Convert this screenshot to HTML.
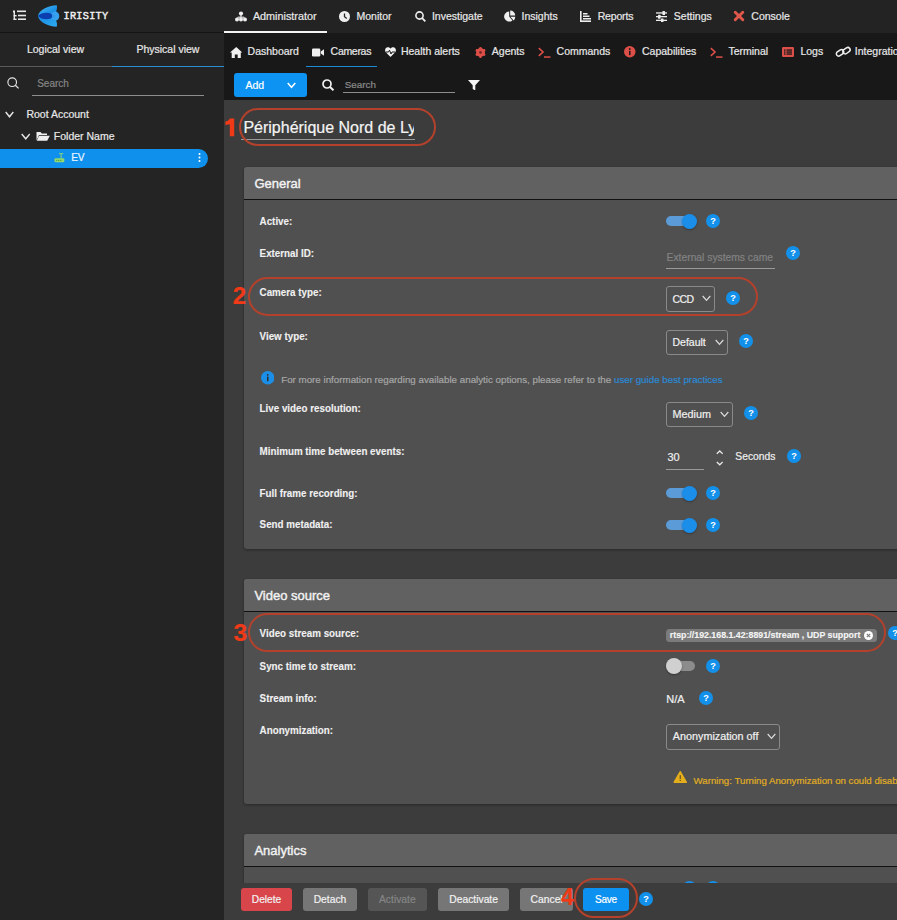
<!DOCTYPE html><html><head><meta charset="utf-8"><style>
html,body{margin:0;padding:0}
body{width:897px;height:920px;overflow:hidden;position:relative;background:#3c3c3c;font-family:"Liberation Sans", sans-serif}
.a{position:absolute}
.t{position:absolute;white-space:nowrap;-webkit-text-stroke:0.2px currentColor}
</style></head><body>
<div class="a" style="left:0px;top:0px;width:224px;height:920px;background:#242424"></div>
<div class="a" style="left:0px;top:0px;width:224px;height:32px;background:#232323"></div>
<div class="a" style="left:0px;top:32px;width:224px;height:1px;background:#151515"></div>
<div class="a" style="left:224px;top:0px;width:673px;height:33px;background:#232323"></div>
<div class="a" style="left:224px;top:33px;width:673px;height:67px;background:#181818"></div>
<div class="a" style="left:224px;top:31px;width:103px;height:2px;background:#f2f2f2"></div>
<svg class="a" style="left:13px;top:10px;" width="13" height="11" viewBox="0 0 13 11"><g fill="#e8e8e8">
<rect x="0" y="0.5" width="2" height="2"/><rect x="4" y="0.5" width="9" height="1.6"/>
<rect x="0.6" y="1" width="1.4" height="9"/>
<rect x="0.6" y="5" width="3" height="1.4"/><rect x="5" y="4.7" width="8" height="1.6"/>
<rect x="0.6" y="8.6" width="3" height="1.4"/><rect x="5" y="8.4" width="8" height="1.6"/>
</g></svg>
<svg class="a" style="left:34px;top:2px;" width="30" height="28" viewBox="0 0 30 28"><defs>
<linearGradient id="lg1" x1="0" y1="0" x2="0.6" y2="1"><stop offset="0" stop-color="#4cc2f4"/><stop offset="0.5" stop-color="#1b8ee6"/><stop offset="1" stop-color="#2aa6ee"/></linearGradient>
</defs>
<path d="M22.7,3.3 C14,3.5 5,8 4,14 C5,20 14,24.5 22.7,24.8 C23.4,22.5 23,20.5 22,18.6 C24.5,17.5 25.2,15.5 25.2,14 C25.2,12.5 24.5,10.5 22,9.4 C23,7.5 23.4,5.5 22.7,3.3 Z" fill="url(#lg1)"/>
<path d="M4,14 C7,10.5 13,10 17,11.5 C19,12.3 20.5,13.3 22,14 C20.5,14.7 19,15.7 17,16.5 C13,18 7,17.5 4,14 Z" fill="#0b3fb0"/>
<path d="M17,11.5 C19.5,9.5 22,9.4 22,9.4 C24.5,10.5 25.2,12.5 25.2,14 C25.2,15.5 24.5,17.5 22,18.6 C20,18 18.5,17 17,16.5 C18.5,15 18.5,13 17,11.5 Z" fill="#3aa2f0" opacity="0.85"/></svg>
<div class="t" style="left:63.5px;top:11.97px;font-size:10.2px;line-height:10.2px;color:#eeeeee;font-weight:400;letter-spacing:0.3px;font-family:'Liberation Mono',monospace;font-weight:400;-webkit-text-stroke:0.45px #eeeeee;">IRISITY</div>
<div class="t" style="left:26.9px;top:43.71px;font-size:10.5px;line-height:10.5px;color:#e8e8e8;font-weight:400;">Logical view</div>
<div class="t" style="left:136.4px;top:43.71px;font-size:10.5px;line-height:10.5px;color:#e8e8e8;font-weight:400;">Physical view</div>
<div class="a" style="left:0px;top:66px;width:112px;height:1px;background:#5a5a5a"></div>
<div class="a" style="left:112px;top:66px;width:112px;height:1.3px;background:#2a8fd2"></div>
<svg class="a" style="left:7px;top:77px;" width="13" height="12" viewBox="0 0 13 12"><circle cx="5.2" cy="5.2" r="4.3" fill="none" stroke="#e6e6e6" stroke-width="1.15"/><line x1="8.3" y1="8.3" x2="11.6" y2="11.4" stroke="#e6e6e6" stroke-width="1.3"/></svg>
<div class="t" style="left:37.2px;top:79.13px;font-size:10px;line-height:10px;color:#858585;font-weight:400;">Search</div>
<div class="a" style="left:32px;top:95px;width:172px;height:1px;background:#8d8d8d"></div>
<svg class="a" style="left:4.6px;top:110.8px;" width="9" height="7.5" viewBox="0 0 9 7.5"><polyline points="0.7,1 4.5,5.8 8.3,1" fill="none" stroke="#e6e6e6" stroke-width="1.4"/></svg>
<div class="t" style="left:26.4px;top:109.11px;font-size:10.5px;line-height:10.5px;color:#e8e8e8;font-weight:400;">Root Account</div>
<svg class="a" style="left:20.6px;top:132.5px;" width="9.5" height="7.5" viewBox="0 0 9.5 7.5"><polyline points="0.7,1 4.75,5.8 8.8,1" fill="none" stroke="#e6e6e6" stroke-width="1.4"/></svg>
<svg class="a" style="left:35.5px;top:131px;" width="14" height="10" viewBox="0 0 14 10"><path d="M0.5,1 L4.5,1 L5.8,2.4 L11,2.4 L11,4 L3,4 L0.5,9.5 Z" fill="#efefef"/><path d="M3,4.8 L13.8,4.8 L11.2,9.8 L0.8,9.8 Z" fill="#efefef"/></svg>
<div class="t" style="left:53.8px;top:130.91px;font-size:10.5px;line-height:10.5px;color:#e8e8e8;font-weight:400;">Folder Name</div>
<div class="a" style="left:0px;top:148.7px;width:208px;height:19.5px;background:#0f90ec;border-radius:0 10px 10px 0"></div>
<svg class="a" style="left:54px;top:152px;" width="11" height="11" viewBox="0 0 11 11"><rect x="0.5" y="6.3" width="9.8" height="4" rx="1" fill="#8fd872"/><rect x="6.6" y="2.2" width="1" height="4.3" fill="#8fd872"/><rect x="5" y="1.2" width="4.2" height="1" fill="#8fd872"/><circle cx="2.8" cy="8.3" r="0.6" fill="#3a8a3a"/><circle cx="4.8" cy="8.3" r="0.6" fill="#3a8a3a"/><circle cx="6.8" cy="8.3" r="0.6" fill="#3a8a3a"/></svg>
<div class="t" style="left:71.3px;top:153.17px;font-size:10.2px;line-height:10.2px;color:#eaf6ff;font-weight:400;letter-spacing:-0.3px;">EV</div>
<svg class="a" style="left:197.5px;top:153px;" width="3" height="9" viewBox="0 0 3 9"><circle cx="1.5" cy="1" r="1" fill="#fff"/><circle cx="1.5" cy="4.5" r="1" fill="#fff"/><circle cx="1.5" cy="8" r="1" fill="#fff"/></svg>
<svg class="a" style="left:235px;top:10.5px;" width="12" height="11" viewBox="0 0 12 11"><g fill="#eee"><circle cx="6" cy="2.6" r="2.1"/><circle cx="2" cy="8.4" r="2"/><circle cx="6" cy="8.4" r="2"/><circle cx="10" cy="8.4" r="2"/><rect x="5.5" y="3" width="1" height="4"/><path d="M1.5,7.5 L3,5.6 L9,5.6 L10.5,7.5 Z" opacity="0.75"/></g></svg>
<div class="t" style="left:252.9px;top:10.86px;font-size:10.8px;line-height:10.8px;color:#e8e8e8;font-weight:400;">Administrator</div>
<svg class="a" style="left:338.5px;top:10.5px;" width="11" height="11" viewBox="0 0 11 11"><circle cx="5.5" cy="5.5" r="5.5" fill="#eee"/><path d="M5.5,2.5 L5.5,5.8 L7.8,7.6" fill="none" stroke="#232323" stroke-width="1.3"/></svg>
<div class="t" style="left:356.5px;top:11.11px;font-size:10.5px;line-height:10.5px;color:#e8e8e8;font-weight:400;">Monitor</div>
<svg class="a" style="left:414.5px;top:10.5px;" width="11" height="11" viewBox="0 0 11 11"><circle cx="4.5" cy="4.5" r="3.6" fill="none" stroke="#eee" stroke-width="1.6"/><line x1="7.2" y1="7.2" x2="10.3" y2="10.3" stroke="#eee" stroke-width="1.8"/></svg>
<div class="t" style="left:431.9px;top:11.11px;font-size:10.5px;line-height:10.5px;color:#e8e8e8;font-weight:400;">Investigate</div>
<svg class="a" style="left:504px;top:10px;" width="13" height="12" viewBox="0 0 13 12"><g fill="#f0f0f0"><path d="M5.2,6.6 L5.2,1.6 A5,5 0 1 0 8.4,10.4 Z"/><path d="M6.2,5.6 L6.2,0.6 A5,5 0 0 1 11.2,5.6 Z"/><path d="M6.4,6.7 L11.3,6.7 A5,5 0 0 1 9.6,10.4 Z"/></g></svg>
<div class="t" style="left:521.5px;top:11.11px;font-size:10.5px;line-height:10.5px;color:#e8e8e8;font-weight:400;">Insights</div>
<svg class="a" style="left:579.7px;top:10.5px;" width="11" height="11" viewBox="0 0 11 11"><g fill="#eee"><rect x="0" y="0" width="1.6" height="11"/><rect x="0" y="9.4" width="11" height="1.6"/><rect x="3" y="2" width="4.5" height="1.5"/><rect x="3" y="4.5" width="6.5" height="1.5"/><rect x="3" y="7" width="8" height="1.5"/></g></svg>
<div class="t" style="left:597.7px;top:11.11px;font-size:10.5px;line-height:10.5px;color:#e8e8e8;font-weight:400;letter-spacing:-0.17px;">Reports</div>
<svg class="a" style="left:655.9px;top:10.5px;" width="11" height="11" viewBox="0 0 11 11"><g fill="#eee"><rect x="0" y="1.3" width="11" height="1.3"/><rect x="0" y="5" width="11" height="1.3"/><rect x="0" y="8.7" width="11" height="1.3"/><rect x="6.5" y="0" width="2.5" height="4" rx="0.5"/><rect x="2" y="3.7" width="2.5" height="4" rx="0.5"/><rect x="5" y="7.4" width="2.5" height="4" rx="0.5"/></g></svg>
<div class="t" style="left:673.8px;top:11.11px;font-size:10.5px;line-height:10.5px;color:#e8e8e8;font-weight:400;">Settings</div>
<svg class="a" style="left:733px;top:9.5px;" width="12" height="12" viewBox="0 0 12 12"><g stroke="#e2574c" stroke-width="2.9" stroke-linecap="round"><line x1="2.2" y1="2.2" x2="9.8" y2="9.8"/><line x1="9.8" y1="2.2" x2="2.2" y2="9.8"/></g></svg>
<div class="t" style="left:751.3px;top:11.11px;font-size:10.5px;line-height:10.5px;color:#e8e8e8;font-weight:400;">Console</div>
<svg class="a" style="left:229.8px;top:46.5px;" width="12.5" height="11" viewBox="0 0 12.5 11"><path d="M6.25,0 L12.5,5.6 L10.8,5.6 L10.8,11 L7.7,11 L7.7,7.6 L4.8,7.6 L4.8,11 L1.7,11 L1.7,5.6 L0,5.6 Z" fill="#f0f0f0"/></svg>
<div class="t" style="left:247.6px;top:46.11px;font-size:10.5px;line-height:10.5px;color:#e8e8e8;font-weight:400;">Dashboard</div>
<svg class="a" style="left:311.9px;top:47.5px;" width="12.5" height="9" viewBox="0 0 12.5 9"><rect x="0" y="0.5" width="8.3" height="8" rx="1.2" fill="#f0f0f0"/><path d="M8.8,3.5 L12.3,1 L12.3,8 L8.8,5.5 Z" fill="#f0f0f0"/></svg>
<div class="t" style="left:330.6px;top:46.11px;font-size:10.5px;line-height:10.5px;color:#e8e8e8;font-weight:400;letter-spacing:-0.3px;">Cameras</div>
<div class="a" style="left:306px;top:65.5px;width:71px;height:1.6px;background:#1d8ad8"></div>
<svg class="a" style="left:384.5px;top:46.5px;" width="11" height="10" viewBox="0 0 11 10"><path d="M5.5,10 L0.8,5.3 C-0.6,3.7 0,0.6 2.8,0.3 C4,0.2 5,0.9 5.5,1.7 C6,0.9 7,0.2 8.2,0.3 C11,0.6 11.6,3.7 10.2,5.3 Z" fill="#f0f0f0"/><polyline points="1,5 3.5,5 4.5,3.2 6,7 7,5 10,5" fill="none" stroke="#181818" stroke-width="1"/></svg>
<div class="t" style="left:400.9px;top:46.11px;font-size:10.5px;line-height:10.5px;color:#e8e8e8;font-weight:400;">Health alerts</div>
<svg class="a" style="left:474.5px;top:46.5px;" width="11" height="11" viewBox="0 0 11 11"><g fill="#dc4f48"><circle cx="5.5" cy="5.5" r="4.4"/><circle cx="5.5" cy="1.3" r="1.3"/><circle cx="5.5" cy="9.7" r="1.3"/><circle cx="1.9" cy="3.4" r="1.3"/><circle cx="9.1" cy="3.4" r="1.3"/><circle cx="1.9" cy="7.6" r="1.3"/><circle cx="9.1" cy="7.6" r="1.3"/></g><circle cx="5.5" cy="5.5" r="1.4" fill="#7a2a28"/></svg>
<div class="t" style="left:491.8px;top:46.11px;font-size:10.5px;line-height:10.5px;color:#e8e8e8;font-weight:400;">Agents</div>
<svg class="a" style="left:538.4px;top:46.5px;" width="13" height="11" viewBox="0 0 13 11"><polyline points="0.8,1.2 5,5 0.8,8.8" fill="none" stroke="#dc4f48" stroke-width="1.6"/><rect x="6" y="9.3" width="6.5" height="1.5" fill="#dc4f48"/></svg>
<div class="t" style="left:556.6px;top:46.11px;font-size:10.5px;line-height:10.5px;color:#e8e8e8;font-weight:400;">Commands</div>
<svg class="a" style="left:624.4px;top:46px;" width="11.5" height="11.5" viewBox="0 0 11.5 11.5"><circle cx="5.75" cy="5.75" r="5.75" fill="#dc4f48"/><rect x="5" y="4.8" width="1.5" height="4.3" fill="#181818"/><circle cx="5.75" cy="3" r="0.9" fill="#181818"/></svg>
<div class="t" style="left:642px;top:46.11px;font-size:10.5px;line-height:10.5px;color:#e8e8e8;font-weight:400;">Capabilities</div>
<svg class="a" style="left:709.8px;top:46.5px;" width="13" height="11" viewBox="0 0 13 11"><polyline points="0.8,1.2 5,5 0.8,8.8" fill="none" stroke="#dc4f48" stroke-width="1.6"/><rect x="6" y="9.3" width="6.5" height="1.5" fill="#dc4f48"/></svg>
<div class="t" style="left:728.4px;top:46.11px;font-size:10.5px;line-height:10.5px;color:#e8e8e8;font-weight:400;">Terminal</div>
<svg class="a" style="left:782.2px;top:46.5px;" width="12" height="10" viewBox="0 0 12 10"><rect x="0" y="0" width="12" height="10" rx="1.3" fill="#dc4f48"/><g fill="#181818"><rect x="2" y="2.4" width="1.5" height="1.3"/><rect x="4.5" y="2.4" width="5.5" height="1.3"/><rect x="2" y="4.4" width="1.5" height="1.3"/><rect x="4.5" y="4.4" width="5.5" height="1.3"/><rect x="2" y="6.4" width="1.5" height="1.3"/><rect x="4.5" y="6.4" width="5.5" height="1.3"/></g></svg>
<div class="t" style="left:800.4px;top:46.11px;font-size:10.5px;line-height:10.5px;color:#e8e8e8;font-weight:400;">Logs</div>
<svg class="a" style="left:835px;top:45px;" width="16" height="13" viewBox="0 0 16 13"><g fill="none" stroke="#f0f0f0" stroke-width="1.5"><rect x="1.1" y="5.6" width="7.8" height="4.6" rx="2.3" transform="rotate(-35 5 7.9)"/><rect x="7.6" y="3.4" width="7.8" height="4.6" rx="2.3" transform="rotate(-35 11.5 5.7)"/></g></svg>
<div class="t" style="left:854.8px;top:46.11px;font-size:10.5px;line-height:10.5px;color:#e8e8e8;font-weight:400;">Integrations</div>
<div class="a" style="left:234px;top:73px;width:73px;height:24px;background:#0d93f2;border-radius:3px"></div>
<div class="t" style="left:245.5px;top:79.71px;font-size:10.5px;line-height:10.5px;color:#ffffff;font-weight:400;">Add</div>
<svg class="a" style="left:286.7px;top:82px;" width="9" height="7" viewBox="0 0 9 7"><polyline points="0.7,1 4.5,5.3 8.3,1" fill="none" stroke="#ffffff" stroke-width="1.5"/></svg>
<svg class="a" style="left:322px;top:78.5px;" width="12.5" height="12" viewBox="0 0 12.5 12"><circle cx="5" cy="5" r="4" fill="none" stroke="#f0f0f0" stroke-width="1.7"/><line x1="8" y1="8" x2="11.5" y2="11.3" stroke="#f0f0f0" stroke-width="2"/></svg>
<div class="t" style="left:344.8px;top:80.30px;font-size:9.8px;line-height:9.8px;color:#8a8a8a;font-weight:400;">Search</div>
<div class="a" style="left:343px;top:92px;width:112px;height:1px;background:#8d8d8d"></div>
<svg class="a" style="left:468.2px;top:79.5px;" width="12" height="10.5" viewBox="0 0 12 10.5"><path d="M0,0 L12,0 L7.3,5.2 L7.3,10.5 L4.7,9 L4.7,5.2 Z" fill="#f4f4f4"/></svg>
<div class="t" style="left:243.4px;top:120.46px;font-size:16px;line-height:16px;color:#f4f4f4;font-weight:400;width:171px;overflow:hidden;">Périphérique Nord de Ly</div>
<div class="a" style="left:241px;top:138.5px;width:173.5px;height:1px;background:#9a9a9a"></div>
<div class="a" style="left:238.5px;top:107.8px;width:197.5px;height:38.2px;box-sizing:border-box;border:2px solid #b3412c;border-radius:19.1px"></div>
<svg class="a" style="left:224px;top:117px;" width="12" height="21" viewBox="0 0 12 21"><path d="M6,1.4 L10.2,1.4 L10.2,19.3 L5.8,19.3 L5.8,7.2 L1.4,8 L1.4,4.6 C3.6,4.2 5,3 6,1.4 Z" fill="#f03a17"/></svg>
<div class="a" style="left:244px;top:167px;width:700px;height:382px;background:#505050;border-radius:3px;box-shadow:0 1px 3px rgba(0,0,0,.35)"></div>
<div class="a" style="left:244px;top:167px;width:700px;height:32px;background:#616161;border-radius:3px 3px 0 0"></div>
<div class="a" style="left:244px;top:199px;width:700px;height:1px;background:#111"></div>
<div class="t" style="left:254.4px;top:176.90px;font-size:13px;line-height:13px;color:#f2f2f2;font-weight:400;-webkit-text-stroke:0.4px #f2f2f2;">General</div>
<div class="t" style="left:259.6px;top:216.80px;font-size:9.8px;line-height:9.8px;color:#f0f0f0;font-weight:700;-webkit-text-stroke:0.1px #f0f0f0;transform:scaleY(1.13);transform-origin:0 84.65%;">Active:</div>
<div class="a" style="left:666px;top:216px;width:28px;height:10px;background:#5b9bd8;border-radius:5px"></div>
<div class="a" style="left:682px;top:213.5px;width:15px;height:15px;background:#1a8ee8;border-radius:50%;box-shadow:0 1px 2px rgba(0,0,0,.3)"></div>
<svg class="a" style="left:706.0px;top:214.0px;" width="14" height="14" viewBox="0 0 14 14"><circle cx="7.0" cy="7.0" r="7.0" fill="#1290ea"/><text x="7.0" y="10.3" text-anchor="middle" font-family="Liberation Sans" font-weight="700" font-size="9.2" fill="#fff">?</text></svg>
<div class="t" style="left:259.6px;top:249.10px;font-size:9.8px;line-height:9.8px;color:#f0f0f0;font-weight:700;-webkit-text-stroke:0.1px #f0f0f0;transform:scaleY(1.13);transform-origin:0 84.65%;">External ID:</div>
<div class="t" style="left:666.6px;top:252.78px;font-size:10.3px;line-height:10.3px;color:#828282;font-weight:400;width:108px;overflow:hidden;">External systems came</div>
<div class="a" style="left:666px;top:267.5px;width:109px;height:1px;background:#9a9a9a"></div>
<svg class="a" style="left:786.0px;top:246.0px;" width="14" height="14" viewBox="0 0 14 14"><circle cx="7.0" cy="7.0" r="7.0" fill="#1290ea"/><text x="7.0" y="10.3" text-anchor="middle" font-family="Liberation Sans" font-weight="700" font-size="9.2" fill="#fff">?</text></svg>
<div class="t" style="left:259.6px;top:288.20px;font-size:9.8px;line-height:9.8px;color:#f0f0f0;font-weight:700;-webkit-text-stroke:0.1px #f0f0f0;transform:scaleY(1.13);transform-origin:0 84.65%;">Camera type:</div>
<div class="a" style="left:666px;top:286px;width:49px;height:25.5px;box-sizing:border-box;border:1px solid #8a8a8a;border-radius:3px"></div>
<div class="t" style="left:672.5px;top:294.01px;font-size:10.5px;line-height:10.5px;color:#f0f0f0;font-weight:400;letter-spacing:-0.6px;">CCD</div>
<svg class="a" style="left:701.7px;top:295.25px;" width="9" height="7" viewBox="0 0 9 7"><polyline points="0.7,1 4.5,5.3 8.3,1" fill="none" stroke="#dcdcdc" stroke-width="1.2"/></svg>
<svg class="a" style="left:726.0px;top:291.0px;" width="14" height="14" viewBox="0 0 14 14"><circle cx="7.0" cy="7.0" r="7.0" fill="#1290ea"/><text x="7.0" y="10.3" text-anchor="middle" font-family="Liberation Sans" font-weight="700" font-size="9.2" fill="#fff">?</text></svg>
<div class="a" style="left:248.4px;top:277px;width:509.70000000000005px;height:39px;box-sizing:border-box;border:2px solid #b3412c;border-radius:19.5px"></div>
<div class="t" style="left:232.8px;top:283.68px;font-size:24px;line-height:24px;color:#f03a17;font-weight:700;">2</div>
<div class="t" style="left:259.6px;top:331.90px;font-size:9.8px;line-height:9.8px;color:#f0f0f0;font-weight:700;-webkit-text-stroke:0.1px #f0f0f0;transform:scaleY(1.13);transform-origin:0 84.65%;">View type:</div>
<div class="a" style="left:666px;top:330px;width:62px;height:24.5px;box-sizing:border-box;border:1px solid #8a8a8a;border-radius:3px"></div>
<div class="t" style="left:672.5px;top:337.31px;font-size:10.5px;line-height:10.5px;color:#f0f0f0;font-weight:400;">Default</div>
<svg class="a" style="left:714.8px;top:338.75px;" width="9" height="7" viewBox="0 0 9 7"><polyline points="0.7,1 4.5,5.3 8.3,1" fill="none" stroke="#dcdcdc" stroke-width="1.2"/></svg>
<svg class="a" style="left:739.0px;top:334.0px;" width="14" height="14" viewBox="0 0 14 14"><circle cx="7.0" cy="7.0" r="7.0" fill="#1290ea"/><text x="7.0" y="10.3" text-anchor="middle" font-family="Liberation Sans" font-weight="700" font-size="9.2" fill="#fff">?</text></svg>
<svg class="a" style="left:260.7px;top:371.4px;" width="13.5" height="13.5" viewBox="0 0 13.5 13.5"><circle cx="6.75" cy="6.75" r="6.75" fill="#1b8fe8"/><rect x="6" y="5.6" width="1.5" height="4.6" fill="#2c2c2c"/><circle cx="6.75" cy="3.8" r="0.9" fill="#2c2c2c"/></svg>
<div class="t" style="left:281.2px;top:375.42px;font-size:9.78px;line-height:9.78px;color:#a6a6a6;font-weight:400;">For more information regarding available analytic options, please refer to the <span style="color:#2a8ad6">user guide best practices</span></div>
<div class="t" style="left:259.6px;top:404.00px;font-size:9.8px;line-height:9.8px;color:#f0f0f0;font-weight:700;-webkit-text-stroke:0.1px #f0f0f0;transform:scaleY(1.13);transform-origin:0 84.65%;">Live video resolution:</div>
<div class="a" style="left:666px;top:402px;width:67px;height:25px;box-sizing:border-box;border:1px solid #8a8a8a;border-radius:3px"></div>
<div class="t" style="left:672.5px;top:408.96px;font-size:10.8px;line-height:10.8px;color:#f0f0f0;font-weight:400;">Medium</div>
<svg class="a" style="left:719.6px;top:411.0px;" width="9" height="7" viewBox="0 0 9 7"><polyline points="0.7,1 4.5,5.3 8.3,1" fill="none" stroke="#dcdcdc" stroke-width="1.2"/></svg>
<svg class="a" style="left:744.0px;top:406.0px;" width="14" height="14" viewBox="0 0 14 14"><circle cx="7.0" cy="7.0" r="7.0" fill="#1290ea"/><text x="7.0" y="10.3" text-anchor="middle" font-family="Liberation Sans" font-weight="700" font-size="9.2" fill="#fff">?</text></svg>
<div class="t" style="left:259.6px;top:446.80px;font-size:9.8px;line-height:9.8px;color:#f0f0f0;font-weight:700;-webkit-text-stroke:0.1px #f0f0f0;transform:scaleY(1.13);transform-origin:0 84.65%;">Minimum time between events:</div>
<div class="t" style="left:667.5px;top:451.89px;font-size:11px;line-height:11px;color:#eeeeee;font-weight:400;">30</div>
<div class="a" style="left:666px;top:469px;width:38px;height:1px;background:#9a9a9a"></div>
<svg class="a" style="left:715.5px;top:449.5px;" width="7.5" height="16" viewBox="0 0 7.5 16"><polyline points="0.8,3.8 3.75,1 6.7,3.8" fill="none" stroke="#e8e8e8" stroke-width="1.3"/><polyline points="0.8,12 3.75,14.8 6.7,12" fill="none" stroke="#e8e8e8" stroke-width="1.3"/></svg>
<div class="t" style="left:735.3px;top:452.48px;font-size:10.3px;line-height:10.3px;color:#eeeeee;font-weight:400;">Seconds</div>
<svg class="a" style="left:787.0px;top:449.0px;" width="14" height="14" viewBox="0 0 14 14"><circle cx="7.0" cy="7.0" r="7.0" fill="#1290ea"/><text x="7.0" y="10.3" text-anchor="middle" font-family="Liberation Sans" font-weight="700" font-size="9.2" fill="#fff">?</text></svg>
<div class="t" style="left:259.6px;top:489.20px;font-size:9.8px;line-height:9.8px;color:#f0f0f0;font-weight:700;-webkit-text-stroke:0.1px #f0f0f0;transform:scaleY(1.13);transform-origin:0 84.65%;">Full frame recording:</div>
<div class="a" style="left:666px;top:488px;width:28px;height:10px;background:#5b9bd8;border-radius:5px"></div>
<div class="a" style="left:682px;top:485.5px;width:15px;height:15px;background:#1a8ee8;border-radius:50%;box-shadow:0 1px 2px rgba(0,0,0,.3)"></div>
<svg class="a" style="left:706.0px;top:486.0px;" width="14" height="14" viewBox="0 0 14 14"><circle cx="7.0" cy="7.0" r="7.0" fill="#1290ea"/><text x="7.0" y="10.3" text-anchor="middle" font-family="Liberation Sans" font-weight="700" font-size="9.2" fill="#fff">?</text></svg>
<div class="t" style="left:259.6px;top:520.40px;font-size:9.8px;line-height:9.8px;color:#f0f0f0;font-weight:700;-webkit-text-stroke:0.1px #f0f0f0;transform:scaleY(1.13);transform-origin:0 84.65%;">Send metadata:</div>
<div class="a" style="left:666px;top:520px;width:28px;height:10px;background:#5b9bd8;border-radius:5px"></div>
<div class="a" style="left:682px;top:517.5px;width:15px;height:15px;background:#1a8ee8;border-radius:50%;box-shadow:0 1px 2px rgba(0,0,0,.3)"></div>
<svg class="a" style="left:706.0px;top:518.0px;" width="14" height="14" viewBox="0 0 14 14"><circle cx="7.0" cy="7.0" r="7.0" fill="#1290ea"/><text x="7.0" y="10.3" text-anchor="middle" font-family="Liberation Sans" font-weight="700" font-size="9.2" fill="#fff">?</text></svg>
<div class="a" style="left:244px;top:579px;width:700px;height:225px;background:#505050;border-radius:3px;box-shadow:0 1px 3px rgba(0,0,0,.35)"></div>
<div class="a" style="left:244px;top:579px;width:700px;height:32px;background:#616161;border-radius:3px 3px 0 0"></div>
<div class="a" style="left:244px;top:611px;width:700px;height:1px;background:#111"></div>
<div class="t" style="left:254.4px;top:588.50px;font-size:13px;line-height:13px;color:#f2f2f2;font-weight:400;-webkit-text-stroke:0.4px #f2f2f2;">Video source</div>
<div class="t" style="left:259.6px;top:629.10px;font-size:9.8px;line-height:9.8px;color:#f0f0f0;font-weight:700;-webkit-text-stroke:0.1px #f0f0f0;transform:scaleY(1.13);transform-origin:0 84.65%;">Video stream source:</div>
<div class="a" style="left:665.8px;top:628.8px;width:211px;height:13.2px;background:#7b7b7b;border-radius:3.5px"></div>
<div class="t" style="left:669.8px;top:630.85px;font-size:8.8px;line-height:8.8px;color:#f4f4f4;font-weight:700;-webkit-text-stroke:0.15px #f4f4f4;letter-spacing:0px;">rtsp://192.168.1.42:8891/stream , UDP support</div>
<svg class="a" style="left:863.5px;top:630.5px;" width="9" height="9" viewBox="0 0 9 9"><circle cx="4.5" cy="4.5" r="4.5" fill="#fff"/><path d="M2.8,2.8 L6.2,6.2 M6.2,2.8 L2.8,6.2" stroke="#7b7b7b" stroke-width="1.2"/></svg>
<svg class="a" style="left:887.5px;top:626.0px;" width="14" height="14" viewBox="0 0 14 14"><circle cx="7.0" cy="7.0" r="7.0" fill="#1290ea"/><text x="7.0" y="10.3" text-anchor="middle" font-family="Liberation Sans" font-weight="700" font-size="9.2" fill="#fff">?</text></svg>
<div class="a" style="left:248.4px;top:613px;width:637.3000000000001px;height:38.799999999999955px;box-sizing:border-box;border:2px solid #b3412c;border-radius:19.399999999999977px"></div>
<div class="t" style="left:233.4px;top:621.06px;font-size:24.5px;line-height:24.5px;color:#f03a17;font-weight:700;">3</div>
<div class="t" style="left:259.6px;top:662.10px;font-size:9.8px;line-height:9.8px;color:#f0f0f0;font-weight:700;-webkit-text-stroke:0.1px #f0f0f0;transform:scaleY(1.13);transform-origin:0 84.65%;">Sync time to stream:</div>
<div class="a" style="left:665.5px;top:661px;width:29px;height:10px;background:#8c8c8c;border-radius:5px"></div>
<div class="a" style="left:665.5px;top:658px;width:16px;height:16px;background:#d0d0d0;border-radius:50%;box-shadow:0 1px 2px rgba(0,0,0,.35)"></div>
<svg class="a" style="left:706.0px;top:659.0px;" width="14" height="14" viewBox="0 0 14 14"><circle cx="7.0" cy="7.0" r="7.0" fill="#1290ea"/><text x="7.0" y="10.3" text-anchor="middle" font-family="Liberation Sans" font-weight="700" font-size="9.2" fill="#fff">?</text></svg>
<div class="t" style="left:259.6px;top:694.00px;font-size:9.8px;line-height:9.8px;color:#f0f0f0;font-weight:700;-webkit-text-stroke:0.1px #f0f0f0;transform:scaleY(1.13);transform-origin:0 84.65%;">Stream info:</div>
<div class="t" style="left:666.3px;top:693.69px;font-size:11px;line-height:11px;color:#eeeeee;font-weight:400;">N/A</div>
<svg class="a" style="left:698.5px;top:691.0px;" width="14" height="14" viewBox="0 0 14 14"><circle cx="7.0" cy="7.0" r="7.0" fill="#1290ea"/><text x="7.0" y="10.3" text-anchor="middle" font-family="Liberation Sans" font-weight="700" font-size="9.2" fill="#fff">?</text></svg>
<div class="t" style="left:259.6px;top:726.10px;font-size:9.8px;line-height:9.8px;color:#f0f0f0;font-weight:700;-webkit-text-stroke:0.1px #f0f0f0;transform:scaleY(1.13);transform-origin:0 84.65%;">Anonymization:</div>
<div class="a" style="left:666.3px;top:724px;width:113.5px;height:25.5px;box-sizing:border-box;border:1px solid #8a8a8a;border-radius:3px"></div>
<div class="t" style="left:672.8px;top:731.16px;font-size:10.8px;line-height:10.8px;color:#f0f0f0;font-weight:400;">Anonymization off</div>
<svg class="a" style="left:767px;top:733.25px;" width="9" height="7" viewBox="0 0 9 7"><polyline points="0.7,1 4.5,5.3 8.3,1" fill="none" stroke="#dcdcdc" stroke-width="1.2"/></svg>
<svg class="a" style="left:672.5px;top:770px;" width="14.5" height="13.5" viewBox="0 0 14.5 13.5"><path d="M7.25,1.8 L13.2,12.2 L1.3,12.2 Z" fill="#e4ad1c" stroke="#e4ad1c" stroke-width="1.6" stroke-linejoin="round"/><rect x="6.7" y="5.2" width="1.1" height="3.9" fill="#5a4a20"/><rect x="6.7" y="9.9" width="1.1" height="1.1" fill="#5a4a20"/></svg>
<div class="t" style="left:693.6px;top:775.51px;font-size:9.68px;line-height:9.68px;color:#e0ad22;font-weight:400;">Warning: Turning Anonymization on could disable analytics</div>
<div class="a" style="left:244px;top:834px;width:700px;height:200px;background:#505050;border-radius:3px;box-shadow:0 1px 3px rgba(0,0,0,.35)"></div>
<div class="a" style="left:244px;top:834px;width:700px;height:32px;background:#616161;border-radius:3px 3px 0 0"></div>
<div class="a" style="left:244px;top:866px;width:700px;height:1px;background:#111"></div>
<div class="t" style="left:254.4px;top:844.00px;font-size:13px;line-height:13px;color:#f2f2f2;font-weight:400;-webkit-text-stroke:0.4px #f2f2f2;">Analytics</div>
<div class="a" style="left:666px;top:883px;width:28px;height:10px;background:#5b9bd8;border-radius:5px"></div>
<div class="a" style="left:682px;top:880.5px;width:15px;height:15px;background:#1a8ee8;border-radius:50%;box-shadow:0 1px 2px rgba(0,0,0,.3)"></div>
<svg class="a" style="left:706.0px;top:881.0px;" width="14" height="14" viewBox="0 0 14 14"><circle cx="7.0" cy="7.0" r="7.0" fill="#1290ea"/><text x="7.0" y="10.3" text-anchor="middle" font-family="Liberation Sans" font-weight="700" font-size="9.2" fill="#fff">?</text></svg>
<div class="a" style="left:224px;top:883px;width:673px;height:37px;background:#3c3c3c"></div>
<div class="a" style="left:240.6px;top:888.4px;width:51.400000000000006px;height:22.4px;background:#d8454a;border-radius:3px"></div>
<div class="t" style="left:251.8px;top:894.97px;font-size:10.2px;line-height:10.2px;color:#f2f2f2;font-weight:400;">Delete</div>
<div class="a" style="left:303px;top:888.4px;width:54px;height:22.4px;background:#767676;border-radius:3px"></div>
<div class="t" style="left:313.7px;top:894.88px;font-size:10.3px;line-height:10.3px;color:#f2f2f2;font-weight:400;">Detach</div>
<div class="a" style="left:368.2px;top:888.4px;width:58.80000000000001px;height:22.4px;background:#555555;border-radius:3px"></div>
<div class="t" style="left:379px;top:894.88px;font-size:10.3px;line-height:10.3px;color:#858585;font-weight:400;">Activate</div>
<div class="a" style="left:438px;top:888.4px;width:71px;height:22.4px;background:#767676;border-radius:3px"></div>
<div class="t" style="left:449.3px;top:894.88px;font-size:10.3px;line-height:10.3px;color:#f2f2f2;font-weight:400;">Deactivate</div>
<div class="a" style="left:520px;top:888.4px;width:52.5px;height:22.4px;background:#767676;border-radius:3px"></div>
<div class="t" style="left:530.6px;top:894.88px;font-size:10.3px;line-height:10.3px;color:#f2f2f2;font-weight:400;">Cancel</div>
<div class="a" style="left:583.4px;top:888.4px;width:45.200000000000045px;height:22.4px;background:#0d91f0;border-radius:3px"></div>
<div class="t" style="left:595.1px;top:895.13px;font-size:10px;line-height:10px;color:#ffffff;font-weight:400;letter-spacing:-0.3px;">Save</div>
<svg class="a" style="left:639.0px;top:892.0px;" width="14" height="14" viewBox="0 0 14 14"><circle cx="7.0" cy="7.0" r="7.0" fill="#1290ea"/><text x="7.0" y="10.3" text-anchor="middle" font-family="Liberation Sans" font-weight="700" font-size="9.2" fill="#fff">?</text></svg>
<div class="a" style="left:574px;top:878.4px;width:64.29999999999995px;height:40.10000000000002px;box-sizing:border-box;border:2px solid #b3412c;border-radius:20.05000000000001px"></div>
<div class="t" style="left:561px;top:886.13px;font-size:23px;line-height:23px;color:#f03a17;font-weight:700;">4</div>
</body></html>
